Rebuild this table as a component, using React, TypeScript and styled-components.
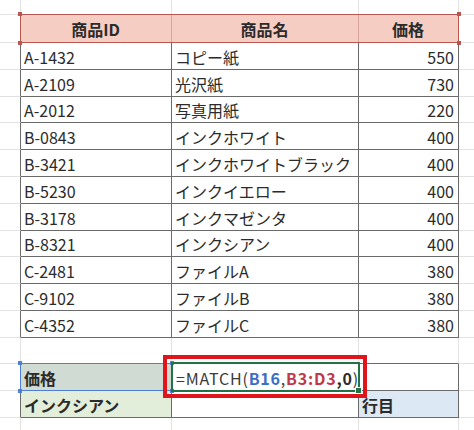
import styled, { createGlobalStyle } from "styled-components";

const GlobalStyle = createGlobalStyle`
    html, body {
        margin: 0;
        padding: 0;
        background: #ffffff;
    }
    body {
        font-family: "Noto Sans CJK JP", "Noto Sans", sans-serif;
        color: #2b2b2b;
    }
`;

const GRID = "#e2e2e2";
const INK = "#6a6a6a";

type Item = [string, string, number];

const items: Item[] = [
    ["A-1432", "コピー紙", 550],
    ["A-2109", "光沢紙", 730],
    ["A-2012", "写真用紙", 220],
    ["B-0843", "インクホワイト", 400],
    ["B-3421", "インクホワイトブラック", 400],
    ["B-5230", "インクイエロー", 400],
    ["B-3178", "インクマゼンタ", 400],
    ["B-8321", "インクシアン", 400],
    ["C-2481", "ファイルA", 380],
    ["C-9102", "ファイルB", 380],
    ["C-4352", "ファイルC", 380],
];

// heights of the data rows (Excel rows are not exactly the same height)
const heights = [27, 27, 26, 27, 27, 27, 27, 26, 27, 27, 27];

function App() {
    return (
        <>
            <GlobalStyle />
            <Sheet>
                <Row $h={15}>
                    <Cell />
                    <Cell $under={GRID} />
                    <Cell $under={GRID} />
                    <Cell $under={GRID} />
                    <Tail />
                </Row>

                <Row $h={28}>
                    <Cell $line={INK} />
                    <Cell $bg="#f6cdc3" $line="#d9a29a" $under="#b8574f" $align="center" $bold>商品ID</Cell>
                    <Cell $bg="#f6cdc3" $line="#d9a29a" $under="#b8574f" $align="center" $bold>商品名</Cell>
                    <Cell $bg="#f6cdc3" $line="#b8574f" $under="#b8574f" $align="center" $bold>価格</Cell>
                    <Tail />
                </Row>

                {items.map((item, i) => (
                    <Row key={item[0]} $h={heights[i]}>
                        <Cell $line={INK} />
                        <Cell $line={INK} $under={INK}>{item[0]}</Cell>
                        <Cell $line={INK} $under={INK}>{item[1]}</Cell>
                        <Cell $line={INK} $under={INK} $align="right">{item[2]}</Cell>
                        <Tail />
                    </Row>
                ))}

                <Row $h={26}>
                    <Cell />
                    <Cell $under={INK} />
                    <Cell $under={INK} />
                    <Cell $line={GRID} $under={INK} />
                    <Tail />
                </Row>

                <Row $h={27}>
                    <Cell $line={INK} />
                    <Cell $bg="#d0dcd3" $line={INK} $under={INK} $bold>価格</Cell>
                    <Cell $line={INK} $under={INK}>
                        <Formula>
                            =MATCH(<Ref $color="#3b6fc6">B16</Ref>,<Ref $color="#c0384a">B3:D3</Ref><Ref>,0</Ref>)
                        </Formula>
                    </Cell>
                    <Cell $line={INK} $under={INK} />
                    <Tail />
                </Row>

                <Row $h={27}>
                    <Cell $line={INK} />
                    <Cell $bg="#e2eed9" $line={INK} $under={INK} $bold>インクシアン</Cell>
                    <Cell $line={INK} $under={INK} />
                    <Cell $bg="#dce9f5" $line={INK} $under={INK} $bold>行目</Cell>
                    <Tail />
                </Row>

                <Row $h={13}>
                    <Cell />
                    <Cell />
                    <Cell />
                    <Cell />
                    <Tail />
                </Row>

                <RefFrame $color="#b8574f" style={{ left: 20, top: 14, width: 439, height: 29 }}>
                    <Handle $color="#b8574f" $x="left" $y="top" />
                    <Handle $color="#b8574f" $x="right" $y="top" />
                    <Handle $color="#b8574f" $x="left" $y="bottom" />
                    <Handle $color="#b8574f" $x="right" $y="bottom" />
                </RefFrame>

                <RefFrame $color="#4f7fd2" style={{ left: 20, top: 363, width: 152, height: 28 }}>
                    <Handle $color="#4f7fd2" $x="left" $y="top" />
                    <Handle $color="#4f7fd2" $x="right" $y="top" />
                    <Handle $color="#4f7fd2" $x="left" $y="bottom" />
                    <Handle $color="#4f7fd2" $x="right" $y="bottom" />
                </RefFrame>

                <ActiveCell>
                    <FillHandle />
                </ActiveCell>

                <Highlight />
            </Sheet>
        </>
    );
}

export default App;

const Sheet = styled.div`
    position: relative;
    width: 474px;
    height: 430px;
    overflow: hidden;
    background: #ffffff;
`;

const Row = styled.div<{ $h: number }>`
    display: grid;
    grid-template-columns: 21px 151px 187px 100px 1fr;
    height: ${(p) => p.$h}px;
`;

const Cell = styled.div<{
    $bg?: string;
    $line?: string;
    $under?: string;
    $align?: "left" | "center" | "right";
    $bold?: boolean;
}>`
    box-sizing: border-box;
    display: flex;
    align-items: center;
    justify-content: ${(p) => (p.$align === "center" ? "center" : p.$align === "right" ? "flex-end" : "flex-start")};
    padding: 1px 4px 0 3px;
    background: ${(p) => p.$bg || "transparent"};
    border-right: 1px solid ${(p) => p.$line || GRID};
    border-bottom: 1px solid ${(p) => p.$under || GRID};
    font-size: 16px;
    font-weight: ${(p) => (p.$bold ? 700 : 400)};
    line-height: 1;
    white-space: nowrap;
`;

const Tail = styled.div`
    box-sizing: border-box;
    border-bottom: 1px solid ${GRID};
`;

const Formula = styled.span`
    color: #3a3a3a;
    letter-spacing: 0.8px;
    margin-left: 1px;
`;

const Ref = styled.span<{ $color?: string }>`
    color: ${(p) => p.$color || "#2b2b2b"};
    font-weight: 700;
`;

const RefFrame = styled.div<{ $color: string }>`
    position: absolute;
    box-sizing: border-box;
    border: 1px solid ${(p) => p.$color};
    pointer-events: none;
`;

const Handle = styled.div<{ $color: string; $x: "left" | "right"; $y: "top" | "bottom" }>`
    position: absolute;
    width: 4px;
    height: 4px;
    background: ${(p) => p.$color};
    ${(p) => p.$x}: -3px;
    ${(p) => p.$y}: -3px;
`;

const ActiveCell = styled.div`
    position: absolute;
    left: 171px;
    top: 362px;
    width: 189px;
    height: 30px;
    box-sizing: border-box;
    border: 2px solid #217346;
`;

const FillHandle = styled.div`
    position: absolute;
    right: -4px;
    bottom: -4px;
    width: 5px;
    height: 5px;
    background: #217346;
    border: 1px solid #ffffff;
`;

const Highlight = styled.div`
    position: absolute;
    left: 163px;
    top: 355px;
    width: 204px;
    height: 43px;
    box-sizing: border-box;
    border: 4px solid #e0141b;
`;
